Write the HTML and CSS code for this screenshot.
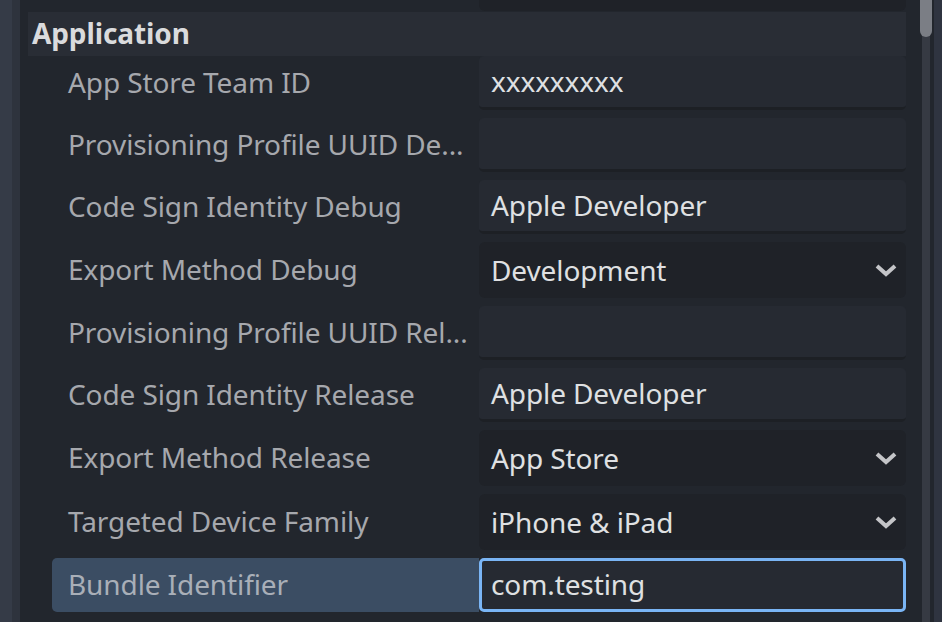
FILE: index.html
```html
<!DOCTYPE html>
<html lang="en">
<head>
    <meta charset="UTF-8">
    <title>Inspector - Application</title>
    <link rel="stylesheet" href="styles.css">
</head>
<body>

<div class="editor">
    <div class="dock-edge"></div>
    <div class="dock-gutter"></div>

    <div class="inspector">
        <div class="prev-field"></div>

        <div class="section-header">Application</div>

        <div class="prop">
            <div class="prop-label">App Store Team ID</div>
            <div class="line-edit">xxxxxxxxx</div>
        </div>
        <div class="prop">
            <div class="prop-label">Provisioning Profile UUID De...</div>
            <div class="line-edit"></div>
        </div>
        <div class="prop">
            <div class="prop-label">Code Sign Identity Debug</div>
            <div class="line-edit">Apple Developer</div>
        </div>
        <div class="prop">
            <div class="prop-label">Export Method Debug</div>
            <div class="option">
                <span>Development</span>
                <svg class="chevron" width="24" height="14" viewBox="0 0 24 14"><polyline points="3,3 12,11 21,3" /></svg>
            </div>
        </div>
        <div class="prop">
            <div class="prop-label">Provisioning Profile UUID Rel...</div>
            <div class="line-edit"></div>
        </div>
        <div class="prop">
            <div class="prop-label">Code Sign Identity Release</div>
            <div class="line-edit">Apple Developer</div>
        </div>
        <div class="prop">
            <div class="prop-label">Export Method Release</div>
            <div class="option">
                <span>App Store</span>
                <svg class="chevron" width="24" height="14" viewBox="0 0 24 14"><polyline points="3,3 12,11 21,3" /></svg>
            </div>
        </div>
        <div class="prop">
            <div class="prop-label">Targeted Device Family</div>
            <div class="option">
                <span>iPhone &amp; iPad</span>
                <svg class="chevron" width="24" height="14" viewBox="0 0 24 14"><polyline points="3,3 12,11 21,3" /></svg>
            </div>
        </div>
        <div class="prop selected">
            <div class="prop-label">Bundle Identifier</div>
            <div class="line-edit focused">com.testing</div>
        </div>
    </div>

    <div class="scroll-area">
        <div class="scrollbar">
            <div class="grabber"></div>
        </div>
    </div>
    <div class="right-edge"></div>
</div>

</body>
</html>
```

FILE: styles.css
```css
/* === Godot-like inspector panel === */
body {
  margin: 0;
  background: #22262d;
  font-family: "Noto Sans", "Open Sans", sans-serif;
  font-size: 28px;
  letter-spacing: -0.1px;
  overflow: hidden;
}

.editor {
  display: flex;
  width: 942px;
  height: 622px;
  overflow: hidden;
}

.dock-edge {
  width: 12px;
  background: #353b47;
}

.dock-gutter {
  width: 8px;
  background: #2e333d;
}

.inspector {
  flex: 1;
  display: flex;
  flex-direction: column;
  padding: 0 0 0 8px;
  background: #22262d;
}

.prev-field {
  height: 11px;
  margin-left: 451px;
  background: #1f2228;
  border-radius: 0 0 6px 6px;
}

.section-header {
  height: 44px;
  margin-top: 1px;
  padding-left: 4px;
  background: #292d35;
  color: #dadbdd;
  font-weight: bold;
  line-height: 42px;
}

.prop {
  display: flex;
  margin-left: 24px;
  margin-bottom: 8px;
}

.prop-label {
  width: 427px;
  padding: 0 0 3px 16px;
  box-sizing: border-box;
  color: #a6a8ad;
  white-space: nowrap;
  overflow: hidden;
  display: flex;
  align-items: center;
  border-radius: 5px 0 0 5px;
}

.line-edit {
  width: 427px;
  height: 54px;
  box-sizing: border-box;
  padding-left: 12px;
  background: #262a32;
  border-bottom: 3px solid #1d2025;
  border-radius: 5px;
  color: #dfe0e2;
  line-height: 51px;
}

.option {
  width: 427px;
  height: 56px;
  box-sizing: border-box;
  padding: 0 8px 0 12px;
  background: #1f2228;
  border-radius: 6px;
  color: #dfe0e2;
  display: flex;
  align-items: center;
  justify-content: space-between;
}

.chevron polyline {
  fill: none;
  stroke: #c4c5c8;
  stroke-width: 4;
}

.prop.selected .prop-label {
  background: #3b4d63;
  color: #a9afb8;
}

.line-edit.focused {
  border: 3px solid #7ab5f5;
  border-radius: 5px;
  padding-left: 9px;
  line-height: 46px;
}

.scroll-area {
  width: 12px;
  padding-left: 14px;
  background: #22262d;
}

.scrollbar {
  width: 12px;
  height: 100%;
  display: flex;
  flex-direction: column;
  align-items: center;
  background: linear-gradient(to right, transparent 2px, #363a43 2px, #363a43 10px, transparent 10px);
}

.grabber {
  width: 12px;
  height: 37px;
  background: #7b7e85;
  border-radius: 0 0 6px 6px;
}

.right-edge {
  width: 8px;
  margin-left: 2px;
  background: #2f3440;
}
```
